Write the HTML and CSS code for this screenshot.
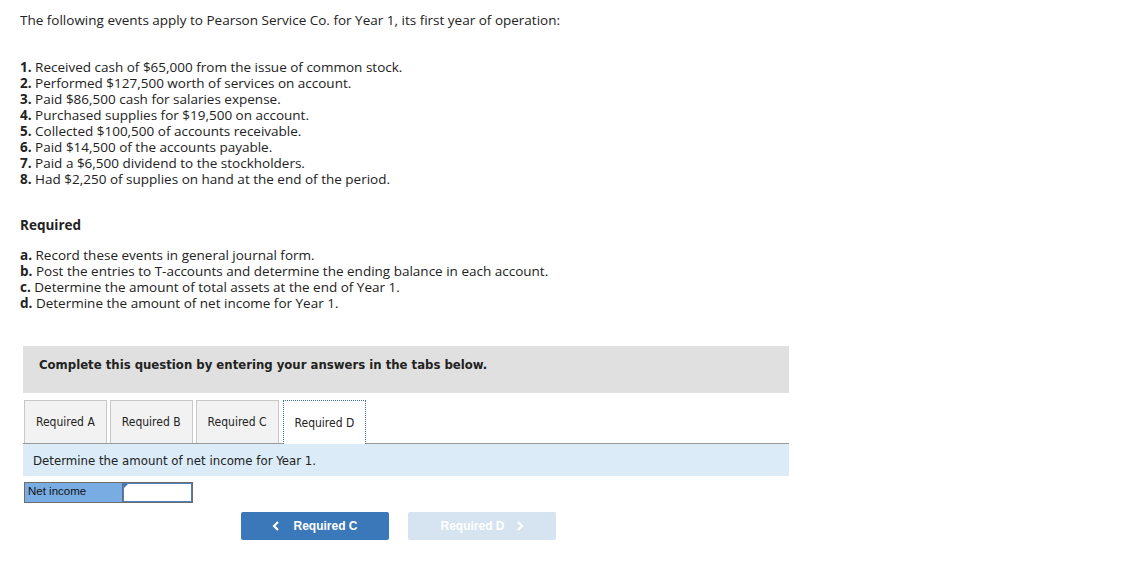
FILE: index.html
```html
<!DOCTYPE html>
<html>
<head>
<meta charset="utf-8">
<link rel="stylesheet" href="styles.css">
</head>
<body>
<div class="page">
  <p class="intro">The following events apply to Pearson Service Co. for Year 1, its first year of operation:</p>
  <ol class="events">
    <li><b>1.</b> Received cash of $65,000 from the issue of common stock.</li>
    <li><b>2.</b> Performed $127,500 worth of services on account.</li>
    <li><b>3.</b> Paid $86,500 cash for salaries expense.</li>
    <li><b>4.</b> Purchased supplies for $19,500 on account.</li>
    <li><b>5.</b> Collected $100,500 of accounts receivable.</li>
    <li><b>6.</b> Paid $14,500 of the accounts payable.</li>
    <li><b>7.</b> Paid a $6,500 dividend to the stockholders.</li>
    <li><b>8.</b> Had $2,250 of supplies on hand at the end of the period.</li>
  </ol>
  <p class="req-title">Required</p>
  <ol class="events reqs">
    <li><b>a.</b> Record these events in general journal form.</li>
    <li><b>b.</b> Post the entries to T-accounts and determine the ending balance in each account.</li>
    <li><b>c.</b> Determine the amount of total assets at the end of Year 1.</li>
    <li><b>d.</b> Determine the amount of net income for Year 1.</li>
  </ol>

  <div class="widget">
    <div class="banner">Complete this question by entering your answers in the tabs below.</div>
    <div class="tabs">
      <div class="tab">Required A</div>
      <div class="tab">Required B</div>
      <div class="tab">Required C</div>
      <div class="tab active">Required D</div>
    </div>
    <div class="prompt">Determine the amount of net income for Year 1.</div>
    <div class="answer-row">
      <div class="answer-label">Net income</div>
      <div class="answer-input"><span class="caret"></span></div>
    </div>
    <div class="nav">
      <button class="btn prev"><svg class="chev" width="8" height="10" viewBox="0 0 8 10"><path d="M6 1 L2 5 L6 9" fill="none" stroke="#fff" stroke-width="2.2"/></svg>Required C</button>
      <button class="btn next">Required D<svg class="chev" width="8" height="10" viewBox="0 0 8 10"><path d="M2 1 L6 5 L2 9" fill="none" stroke="#fff" stroke-width="2.2"/></svg></button>
    </div>
  </div>
</div>
</body>
</html>
```
FILE: styles.css
```css
html, body {
  margin: 0;
  padding: 0;
  background: #fff;
}
.page {
  padding: 12px 0 0 20px;
  font-family: "Open Sans", "Liberation Sans", sans-serif;
  font-size: 13.5px;
  color: #222;
}
.intro {
  margin: 0;
  line-height: 16px;
}
.events {
  list-style: none;
  margin: 31px 0 0 0;
  padding: 0;
}
.events li {
  line-height: 16px;
  height: 16px;
  white-space: nowrap;
}
.events b {
  font-weight: 700;
}
.req-title {
  margin: 30px 0 0 0;
  font-weight: 700;
  line-height: 16px;
}
.reqs {
  margin-top: 14px;
}
.widget {
  margin: 35px 0 0 3px;
  width: 766px;
}
.banner {
  background: #e0e0e0;
  height: 47px;
  box-sizing: border-box;
  padding: 11px 0 0 16px;
  font-family: "DejaVu Sans Condensed", "DejaVu Sans", sans-serif;
  font-weight: 700;
  font-size: 13px;
  color: #222;
}
.tabs {
  display: flex;
  gap: 3px;
  margin-top: 7px;
  border-bottom: 1px solid #999;
  height: 43px;
  align-items: flex-end;
  padding-left: 1px;
}
.tab {
  height: 43px;
  box-sizing: border-box;
  border: 1px solid #c8c8c8;
  border-bottom: none;
  background: #f2f2f2;
  padding: 0 11px;
  display: flex;
  align-items: center;
  font-family: "DejaVu Sans Condensed", "DejaVu Sans", sans-serif;
  font-size: 12px;
  color: #222;
}
.tab.active {
  background: #fff;
  border: 1px dotted #3a6fb0;
  border-bottom: none;
  height: 44px;
  margin-bottom: -1px;
  margin-left: 1px;
}
.prompt {
  background: #dbebf8;
  height: 32px;
  box-sizing: border-box;
  padding: 9px 0 0 10px;
  font-family: "DejaVu Sans Condensed", "DejaVu Sans", sans-serif;
  font-size: 13.1px;
  color: #222;
}
.answer-row {
  display: flex;
  margin: 6px 0 0 1px;
  height: 21px;
}
.answer-label {
  width: 98px;
  background: #79ace3;
  border: 1px solid #6d6d6d;
  border-right: none;
  box-sizing: border-box;
  font-family: "Liberation Sans", Arial, sans-serif;
  font-size: 11.5px;
  color: #111;
  padding: 2px 0 0 3px;
}
.answer-input {
  width: 71px;
  background: #fff;
  border: 1px solid #6d6d6d;
  box-shadow: inset 0 0 0 1px #4a7fc0;
  box-sizing: border-box;
  position: relative;
}
.caret {
  position: absolute;
  left: 1px;
  top: 1px;
  width: 0;
  height: 0;
  border-top: 4px solid #3a78b9;
  border-right: 4px solid transparent;
}
.nav {
  display: flex;
  gap: 19px;
  margin: 9px 0 0 218px;
}
.btn {
  width: 148px;
  height: 28px;
  border: none;
  border-radius: 2px;
  font-family: "Liberation Sans", Arial, sans-serif;
  font-weight: 700;
  font-size: 12px;
  color: #fff;
  display: flex;
  align-items: center;
  justify-content: center;
  padding: 0;
}
.btn.prev {
  background: #3a78b9;
}
.btn.next {
  background: #d6e3f1;
}
.btn.prev .chev {
  margin-right: 13px;
}
.btn.next .chev {
  margin-left: 11px;
}
```
